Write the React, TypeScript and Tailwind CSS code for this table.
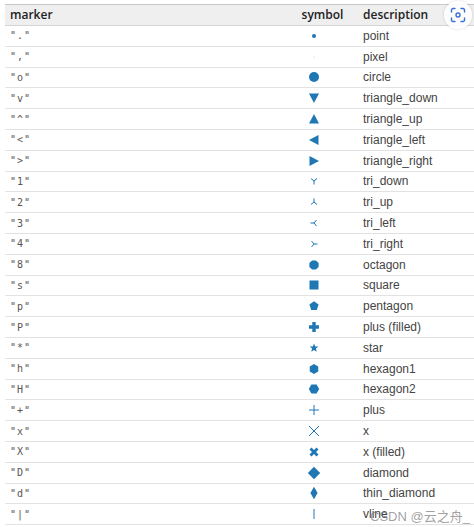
import React from "react";

const blue = "#1f77b4";

type Row = { m: string; desc: string; sym: React.ReactNode };

const poly = (n: number, r: number, rot: number) =>
  Array.from({ length: n }, (_, i) => {
    const a = rot + (i * 2 * Math.PI) / n;
    return `${(r * Math.cos(a)).toFixed(2)},${(r * Math.sin(a)).toFixed(2)}`;
  }).join(" ");

const star = (r: number, ri: number) =>
  Array.from({ length: 10 }, (_, i) => {
    const a = -Math.PI / 2 + (i * Math.PI) / 5;
    const rr = i % 2 === 0 ? r : ri;
    return `${(rr * Math.cos(a)).toFixed(2)},${(rr * Math.sin(a)).toFixed(2)}`;
  }).join(" ");

const Sym = ({ children }: { children: React.ReactNode }) => (
  <svg width="14" height="14" viewBox="-7 -7 14 14" fill={blue} stroke="none">
    {children}
  </svg>
);

const line = (x1: number, y1: number, x2: number, y2: number, k: number) => (
  <line key={k} x1={x1} y1={y1} x2={x2} y2={y2} stroke={blue} strokeWidth={1} />
);

const rows: Row[] = [
  { m: ".", desc: "point", sym: <circle r={2} /> },
  { m: ",", desc: "pixel", sym: <circle r={0.5} opacity={0.4} /> },
  { m: "o", desc: "circle", sym: <circle r={5} /> },
  { m: "v", desc: "triangle_down", sym: <polygon points="-5,-4.5 5,-4.5 0,5" /> },
  { m: "^", desc: "triangle_up", sym: <polygon points="0,-5 5,4.5 -5,4.5" /> },
  { m: "<", desc: "triangle_left", sym: <polygon points="-5,0 4.5,-5 4.5,5" /> },
  { m: ">", desc: "triangle_right", sym: <polygon points="5,0 -4.5,-5 -4.5,5" /> },
  { m: "1", desc: "tri_down", sym: [line(0, 0, 0, 3.5, 1), line(0, 0, -3, -2.5, 2), line(0, 0, 3, -2.5, 3)] },
  { m: "2", desc: "tri_up", sym: [line(0, 0, 0, -3.5, 1), line(0, 0, -3, 2.5, 2), line(0, 0, 3, 2.5, 3)] },
  { m: "3", desc: "tri_left", sym: [line(0, 0, -3.5, 0, 1), line(0, 0, 2.5, -3, 2), line(0, 0, 2.5, 3, 3)] },
  { m: "4", desc: "tri_right", sym: [line(0, 0, 3.5, 0, 1), line(0, 0, -2.5, -3, 2), line(0, 0, -2.5, 3, 3)] },
  { m: "8", desc: "octagon", sym: <polygon points={poly(8, 5, Math.PI / 8)} /> },
  { m: "s", desc: "square", sym: <rect x={-4.5} y={-4.5} width={9} height={9} /> },
  { m: "p", desc: "pentagon", sym: <polygon points={poly(5, 4.8, -Math.PI / 2)} /> },
  {
    m: "P",
    desc: "plus (filled)",
    sym: <polygon points="-1.7,-5 1.7,-5 1.7,-1.7 5,-1.7 5,1.7 1.7,1.7 1.7,5 -1.7,5 -1.7,1.7 -5,1.7 -5,-1.7 -1.7,-1.7" />,
  },
  { m: "*", desc: "star", sym: <polygon points={star(4.6, 2)} /> },
  { m: "h", desc: "hexagon1", sym: <polygon points={poly(6, 4.9, -Math.PI / 2)} /> },
  { m: "H", desc: "hexagon2", sym: <polygon points={poly(6, 5.2, 0)} /> },
  { m: "+", desc: "plus", sym: [line(0, -5, 0, 5, 1), line(-5, 0, 5, 0, 2)] },
  { m: "x", desc: "x", sym: [line(-5, -5, 5, 5, 1), line(-5, 5, 5, -5, 2)] },
  {
    m: "X",
    desc: "x (filled)",
    sym: <polygon points="-4.5,-2.5 -2.5,-4.5 0,-2 2.5,-4.5 4.5,-2.5 2,0 4.5,2.5 2.5,4.5 0,2 -2.5,4.5 -4.5,2.5 -2,0" />,
  },
  { m: "D", desc: "diamond", sym: <polygon points="0,-6.2 6.2,0 0,6.2 -6.2,0" /> },
  { m: "d", desc: "thin_diamond", sym: <polygon points="0,-6.2 3.6,0 0,6.2 -3.6,0" /> },
  { m: "|", desc: "vline", sym: line(0, -5, 0, 5, 1) },
];

export default function App() {
  return (
    <div className="relative w-[474px] h-[527px] overflow-hidden bg-white pt-1">
      <div className="ml-[5px] border-t border-[#c8c8c8]">
        <div className="grid grid-cols-[285px_65px_1fr] h-[21px] items-center bg-[#efefef] border-b border-[#d4d4d4] text-[12px] font-semibold text-[#222] font-['Open_Sans',sans-serif]">
          <div className="pl-[5px]">marker</div>
          <div className="text-center">symbol</div>
          <div className="pl-2">description</div>
        </div>
        {rows.map((r) => (
          <div
            key={r.desc}
            className="grid grid-cols-[285px_65px_1fr] h-[20.8px] items-center border-b border-[#e2e2e2]"
          >
            <div className="pl-[5px] text-[10px] text-[#555] font-['DejaVu_Sans_Mono',monospace] tracking-[1px]">
              "{r.m}"
            </div>
            <div className="flex justify-center pr-[18px]">
              <Sym>{r.sym}</Sym>
            </div>
            <div className="pl-2 text-[12px] text-[#444] font-['Liberation_Sans',Arial,sans-serif]">
              {r.desc}
            </div>
          </div>
        ))}
      </div>

      <div className="absolute right-[2px] top-[1px] w-[28px] h-[28px] rounded-full bg-white/90 shadow-[0_0_3px_rgba(0,0,0,0.15)] flex items-center justify-center">
        <svg width="16" height="16" viewBox="0 0 16 16" fill="none" stroke="#3b6fd8" strokeWidth="1.4" strokeLinecap="round">
          <path d="M1.5 5V2.8a1.3 1.3 0 0 1 1.3-1.3H5" />
          <path d="M11 1.5h2.2a1.3 1.3 0 0 1 1.3 1.3V5" />
          <path d="M14.5 11v2.2a1.3 1.3 0 0 1-1.3 1.3H11" />
          <path d="M5 14.5H2.8a1.3 1.3 0 0 1-1.3-1.3V11" />
          <circle cx="8" cy="8" r="2" />
        </svg>
      </div>

      <div className="absolute left-[370px] top-[507px] text-[13px] text-[#777]/70 font-['Liberation_Sans','Noto_Sans_CJK_SC',sans-serif]">
        CSDN @云之舟_
      </div>
    </div>
  );
}
